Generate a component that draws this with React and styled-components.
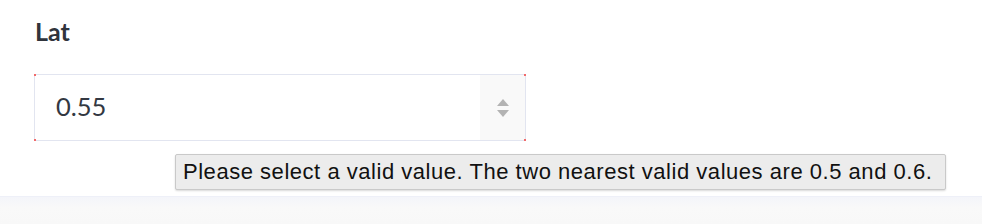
import React from 'react'
import styled, {createGlobalStyle} from 'styled-components'

const GlobalStyle = createGlobalStyle`
    body {
        margin: 0;
        background: #fff;
        font-family: Lato, "Open Sans", sans-serif;
    }
`

const Page = styled.div`
    position: relative;
    width: 982px;
    height: 224px;
    display: flex;
    flex-direction: column;
    overflow: hidden;
`

const Field = styled.div`
    flex: 1;
    padding: 16px 0 0 34px;
    display: flex;
    flex-direction: column;
`

const Label = styled.label`
    font-size: 25px;
    font-weight: 700;
    color: #30343c;
    line-height: 30px;
    padding-left: 1px;
`

const InputBox = styled.div`
    position: relative;
    margin-top: 28px;
    width: 490px;
    height: 65px;
    border: 1px solid #e2e5f0;
    display: flex;
    align-items: stretch;
    background: #fff;
`

const Corner = styled.span`
    position: absolute;
    width: 2px;
    height: 2px;
    background: #f26a6a;
    ${p => p.top ? 'top: -1px;' : 'bottom: -1px;'}
    ${p => p.left ? 'left: -1px;' : 'right: -1px;'}
`

const Value = styled.div`
    flex: 1;
    display: flex;
    align-items: center;
    padding-left: 21px;
    padding-bottom: 3px;
    font-size: 25.5px;
    color: #333842;
`

const Spinner = styled.div`
    width: 45px;
    background: #f9f9f9;
    display: flex;
    align-items: center;
    justify-content: center;
`

const Footer = styled.div`
    height: 27px;
    border-top: 1px solid #eef0f8;
    background: linear-gradient(180deg, #f4f5fa 0%, #f9f9f9 40%, #f8f8f8 100%);
`

const Tooltip = styled.div`
    position: absolute;
    left: 175px;
    top: 154px;
    width: 771px;
    height: 36px;
    background: #ececec;
    border: 1px solid #c9c9c9;
    box-shadow: 0 1px 2px rgba(0,0,0,0.15);
    border-radius: 2px;
    display: flex;
    align-items: center;
    padding-left: 7px;
    box-sizing: border-box;
    font-family: "Liberation Sans", Arial, sans-serif;
    font-size: 22px;
    letter-spacing: 0.53px;
    color: #111;
    white-space: nowrap;
`

const App = () => {
    return (
        <Page>
            <GlobalStyle />
            <Field>
                <Label>Lat</Label>
                <InputBox>
                    <Corner top left />
                    <Corner top />
                    <Corner left />
                    <Corner />
                    <Value>0.55</Value>
                    <Spinner>
                        <svg width="14" height="20" viewBox="0 0 14 20">
                            <path d="M7 1 L13 8 L1 8 Z" fill="#b3b3b3" />
                            <path d="M1 12 L13 12 L7 19 Z" fill="#b3b3b3" />
                        </svg>
                    </Spinner>
                </InputBox>
            </Field>
            <Footer />
            <Tooltip>Please select a valid value. The two nearest valid values are 0.5 and 0.6.</Tooltip>
        </Page>
    )
}

export default App
